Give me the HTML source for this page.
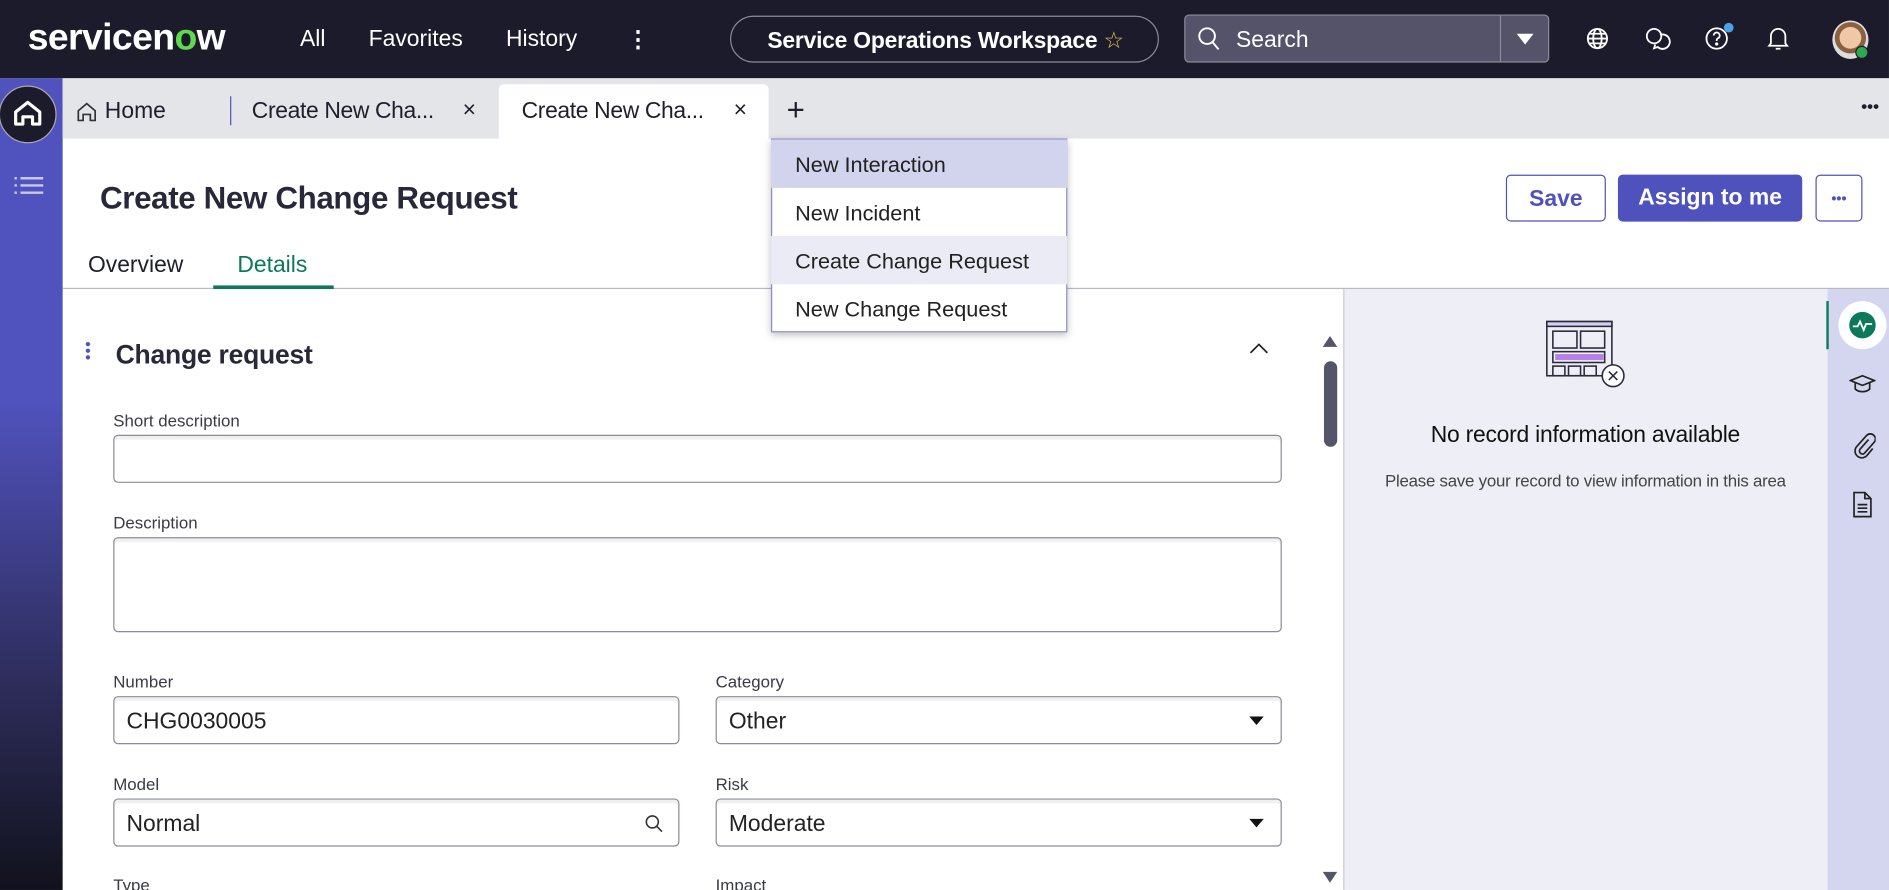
<!DOCTYPE html>
<html><head><meta charset="utf-8"><style>
*{box-sizing:border-box;margin:0;padding:0}
html,body{width:1889px;height:890px;overflow:hidden;background:#fff}
#w{width:1568px;height:739px;transform:scale(1.2047,1.2043);transform-origin:0 0;position:relative;font-family:"Liberation Sans",sans-serif;color:#1e1e2c}
.a{position:absolute}
.top{left:0;top:0;width:1568px;height:65px;background:#1c1b2b;color:#fff}
.nav{font-size:19px;top:22px}
.lbl{font-size:14px;color:#3a3a48}
.inp{border:1px solid #8a8c99;border-radius:4px;background:#fff;box-shadow:inset 0 3px 0 #f0f0f2}
.val{font-size:19px;color:#222;top:10px;left:10px}
.dd{left:640px;width:246px;height:40px;font-size:18px;padding:11px 20px 0;color:#222}
</style></head><body><div id="w">
<div class="a top">
 <div class="a" style="left:23px;top:13px;font-size:31px;font-weight:bold;letter-spacing:-0.5px">servicen<span style="color:#62d84e">o</span>w</div>
 <div class="a nav" style="left:249px">All</div>
 <div class="a nav" style="left:306px">Favorites</div>
 <div class="a nav" style="left:420px">History</div>
 <div class="a nav" style="left:520px;font-weight:bold">⋮</div>
 <div class="a" style="left:606px;top:13px;width:356px;height:39px;border:1px solid #8b8a98;border-radius:20px;font-size:19px;font-weight:bold;padding:9px 0 0 30px;letter-spacing:-0.2px">Service Operations Workspace <span style="color:#e8c15a;font-weight:normal">☆</span></div>
 <div class="a" style="left:983px;top:12px;width:303px;height:40px;background:#54536a;border:1px solid #8b8a98;border-radius:4px">
  <svg class="a" style="left:10px;top:9px" width="20" height="22" viewBox="0 0 20 22"><circle cx="8" cy="8" r="6.5" fill="none" stroke="#fff" stroke-width="1.6"/><path d="M12.5 13l5 6" stroke="#fff" stroke-width="1.6"/></svg>
  <div class="a" style="left:42px;top:10px;font-size:19px">Search</div>
  <div class="a" style="left:261px;top:0;width:1px;height:38px;background:#8b8a98"></div>
  <div class="a" style="left:275px;top:15px;width:0;height:0;border-left:7px solid transparent;border-right:7px solid transparent;border-top:9px solid #fff"></div>
 </div>
 <svg class="a" style="left:1316px;top:22px" width="20" height="20" viewBox="0 0 20 20" fill="none" stroke="#fff" stroke-width="1.5"><circle cx="10" cy="10" r="8"/><ellipse cx="10" cy="10" rx="3.5" ry="8"/><path d="M2 10h16M3.5 6h13M3.5 14h13"/></svg>
 <svg class="a" style="left:1365px;top:22px" width="22" height="20" viewBox="0 0 22 20" fill="none" stroke="#fff" stroke-width="1.5"><circle cx="8" cy="8" r="6"/><path d="M13 7a6 6 0 1 1-2 10l-3 1 1-3"/></svg>
 <svg class="a" style="left:1414px;top:18px" width="26" height="26" viewBox="0 0 26 26" fill="none" stroke="#fff" stroke-width="1.5"><circle cx="11" cy="14" r="8.5"/><path d="M8.5 11.5a2.5 2.5 0 1 1 3.5 2.3c-1 .5-1 1-1 2.2"/><circle cx="11" cy="18.5" r=".6" fill="#fff"/><circle cx="21" cy="5" r="4" fill="#4aa3e8" stroke="none"/></svg>
 <svg class="a" style="left:1466px;top:21px" width="20" height="22" viewBox="0 0 20 22" fill="none" stroke="#fff" stroke-width="1.5"><path d="M4 15V9a6 6 0 0 1 12 0v6l1.5 2h-15z"/><path d="M8 19.5h4"/></svg>
 <div class="a" style="left:1521px;top:17px;width:30px;height:32px;border-radius:50%;background:radial-gradient(circle at 50% 45%,#f0c8a8 0 38%,#8a6040 40% 55%,#ddd 57%)"></div>
 <div class="a" style="left:1540px;top:38px;width:11px;height:11px;border-radius:50%;background:#2fa84f;border:1.5px solid #1c1b2b"></div>
</div>
<div class="a" style="left:0;top:65px;width:52px;height:674px;background:linear-gradient(#5052bd 0,#5052bd 270px,#2e2d5c 500px,#11121c 674px)"></div>
<div class="a" style="left:-1px;top:71px;width:48px;height:48px;border-radius:50%;background:#1c1b2b;border:1px solid #aaa"></div>
<svg class="a" style="left:10px;top:82px" width="26" height="24" viewBox="0 0 26 24" fill="none" stroke="#fff" stroke-width="2.6" stroke-linejoin="round"><path d="M3 11L13 3l10 8v10h-6v-6h-8v6H3z"/></svg>
<svg class="a" style="left:12px;top:146px" width="24" height="16" viewBox="0 0 24 16" stroke="#c9c9e8" stroke-width="2"><path d="M0 2h2M0 8h2M0 14h2M5 2h19M5 8h19M5 14h19"/></svg>
<div class="a" style="left:52px;top:65px;width:1516px;height:50px;background:#e4e5e9"></div>
<svg class="a" style="left:63px;top:84px" width="18" height="18" viewBox="0 0 18 18" fill="none" stroke="#333" stroke-width="1.4"><path d="M2 8L9 2l7 6v8h-4v-5H6v5H2z"/></svg>
<div class="a" style="left:87px;top:82px;font-size:19px">Home</div>
<div class="a" style="left:191px;top:80px;width:1px;height:24px;background:#5052bd"></div>
<div class="a" style="left:209px;top:82px;font-size:19px;letter-spacing:-0.3px">Create New Cha...</div>
<div class="a" style="left:384px;top:81px;font-size:19px">×</div>
<div class="a" style="left:414px;top:70px;width:224px;height:45px;background:#fff;border-radius:4px 4px 0 0"></div>
<div class="a" style="left:433px;top:82px;font-size:19px;letter-spacing:-0.3px">Create New Cha...</div>
<div class="a" style="left:609px;top:81px;font-size:19px">×</div>
<div class="a" style="left:653px;top:76px;font-size:26px;font-weight:300">+</div>
<div class="a" style="left:1545px;top:80px;font-size:14px;font-weight:bold">•••</div>
<div class="a" style="left:83px;top:149px;font-size:26px;font-weight:bold;color:#28283a;letter-spacing:-0.3px">Create New Change Request</div>
<div class="a" style="left:1250px;top:145px;width:83px;height:39px;border:1px solid #5052bd;border-radius:4px;color:#4f52bd;font-size:19px;font-weight:bold;text-align:center;padding-top:9px">Save</div>
<div class="a" style="left:1343px;top:145px;width:153px;height:39px;background:#4f52bd;border-radius:4px;color:#fff;font-size:19px;font-weight:bold;text-align:center;padding-top:9px">Assign to me</div>
<div class="a" style="left:1507px;top:145px;width:39px;height:39px;border:1px solid #5052bd;border-radius:4px;color:#4f52bd;font-size:12px;font-weight:bold;text-align:center;padding-top:12px">•••</div>
<div class="a" style="left:73px;top:210px;font-size:19px">Overview</div>
<div class="a" style="left:197px;top:210px;font-size:19px;color:#0c7a5a">Details</div>
<div class="a" style="left:52px;top:239px;width:1516px;height:1px;background:#b8b9c2"></div>
<div class="a" style="left:177px;top:237px;width:100px;height:3px;background:#0c7a5a"></div>
<div class="a" style="left:1115px;top:240px;width:402px;height:499px;background:#eeeef6;border-left:1px solid #ccc"></div>
<div class="a" style="left:1517px;top:240px;width:51px;height:499px;background:#d4d5ee"></div>
<div class="a" style="left:1516px;top:250px;width:2px;height:40px;background:#0c7a5a"></div>
<div class="a" style="left:1526px;top:250px;width:40px;height:40px;border-radius:50%;background:#fff"></div>
<div class="a" style="left:1535px;top:259px;width:22px;height:22px;border-radius:50%;background:#0c7a5a"></div>
<svg class="a" style="left:1535px;top:259px" width="22" height="22" viewBox="0 0 22 22" fill="none" stroke="#fff" stroke-width="1.5"><path d="M3 12h4l2-4 3 7 2-5h5"/></svg>
<svg class="a" style="left:1535px;top:309px" width="22" height="20" viewBox="0 0 22 20" fill="none" stroke="#222" stroke-width="1.4"><path d="M1 7l10-4 10 4-10 4z"/><path d="M5 9v5c3 3 9 3 12 0V9"/></svg>
<svg class="a" style="left:1537px;top:358px" width="20" height="24" viewBox="0 0 20 24" fill="none" stroke="#222" stroke-width="1.4"><path d="M14 7l-7 8a2.5 2.5 0 0 0 3.5 3.5l8-9a4 4 0 0 0-6-6l-8 9a5.5 5.5 0 0 0 8 8l5-6"/></svg>
<svg class="a" style="left:1537px;top:408px" width="18" height="22" viewBox="0 0 18 22" fill="none" stroke="#222" stroke-width="1.4"><path d="M2 1h9l5 5v15H2z M11 1v5h5 M5 11h8M5 14h8M5 17h8"/></svg>
<svg class="a" style="left:1283px;top:266px" width="70" height="60" viewBox="0 0 70 60" fill="none" stroke="#2a2a3a" stroke-width="1.3"><rect x="1" y="1" width="54" height="45" fill="#eeeef6"/><rect x="1" y="1" width="54" height="4" fill="#d4d0ee"/><rect x="6" y="9" width="20" height="14"/><rect x="29" y="9" width="20" height="14"/><rect x="6" y="26" width="43" height="9"/><rect x="8" y="28" width="40" height="5" fill="#b77fe8" stroke="none"/><rect x="6" y="38" width="10" height="8"/><rect x="19" y="38" width="10" height="8"/><rect x="32" y="38" width="10" height="8"/><circle cx="56" cy="46" r="9" fill="#fff"/><path d="M52.5 42.5l7 7M59.5 42.5l-7 7"/></svg>
<div class="a" style="left:1115px;top:351px;width:402px;text-align:center;font-size:19px;color:#111;letter-spacing:-0.2px">No record information available</div>
<div class="a" style="left:1115px;top:391px;width:402px;text-align:center;font-size:14px;color:#444;letter-spacing:-0.2px">Please save your record to view information in this area</div>
<div class="a" style="left:71px;top:283px;width:4px;height:16px;background:radial-gradient(circle,#4f52bd 1.6px,transparent 2px) 0 0/4px 5.5px"></div>
<div class="a" style="left:96px;top:282px;font-size:22px;font-weight:bold;color:#28283a;letter-spacing:-0.2px">Change request</div>
<svg class="a" style="left:1036px;top:283px" width="18" height="12" viewBox="0 0 18 12" fill="none" stroke="#222" stroke-width="1.4"><path d="M2 10l7-7 7 7"/></svg>
<div class="a" style="left:1098px;top:279px;width:0;height:0;border-left:6px solid transparent;border-right:6px solid transparent;border-bottom:9px solid #55556a"></div>
<div class="a" style="left:1099px;top:300px;width:11px;height:71px;background:#55556a;border-radius:6px"></div>
<div class="a" style="left:1098px;top:724px;width:0;height:0;border-left:6px solid transparent;border-right:6px solid transparent;border-top:9px solid #55556a"></div>
<div class="a lbl" style="left:94px;top:341px">Short description</div>
<div class="a inp" style="left:94px;top:361px;width:970px;height:40px"></div>
<div class="a lbl" style="left:94px;top:426px">Description</div>
<div class="a inp" style="left:94px;top:446px;width:970px;height:79px"></div>
<div class="a lbl" style="left:94px;top:558px">Number</div>
<div class="a inp" style="left:94px;top:578px;width:470px;height:40px"><div class="a val">CHG0030005</div></div>
<div class="a lbl" style="left:594px;top:558px">Category</div>
<div class="a inp" style="left:594px;top:578px;width:470px;height:40px"><div class="a val">Other</div><div class="a" style="right:14px;top:16px;border-left:6px solid transparent;border-right:6px solid transparent;border-top:7px solid #111"></div></div>
<div class="a lbl" style="left:94px;top:643px">Model</div>
<div class="a inp" style="left:94px;top:663px;width:470px;height:40px"><div class="a val">Normal</div><svg class="a" style="right:12px;top:12px" width="16" height="16" viewBox="0 0 16 16" fill="none" stroke="#333" stroke-width="1.3"><circle cx="6.5" cy="6.5" r="5"/><path d="M10 10l4.5 4.5"/></svg></div>
<div class="a lbl" style="left:594px;top:643px">Risk</div>
<div class="a inp" style="left:594px;top:663px;width:470px;height:40px"><div class="a val">Moderate</div><div class="a" style="right:14px;top:16px;border-left:6px solid transparent;border-right:6px solid transparent;border-top:7px solid #111"></div></div>
<div class="a lbl" style="left:94px;top:727px">Type</div>
<div class="a lbl" style="left:594px;top:727px">Impact</div>
<div class="a" style="left:640px;top:115px;width:246px;height:161px;background:#fff;border:1px solid #8a8cc8;box-shadow:0 2px 6px rgba(0,0,0,.25)"></div>
<div class="a dd" style="top:116px;background:#d2d3ec">New Interaction</div>
<div class="a dd" style="top:156px">New Incident</div>
<div class="a dd" style="top:196px;background:#ebebf6">Create Change Request</div>
<div class="a dd" style="top:236px">New Change Request</div>
</div></body></html>
